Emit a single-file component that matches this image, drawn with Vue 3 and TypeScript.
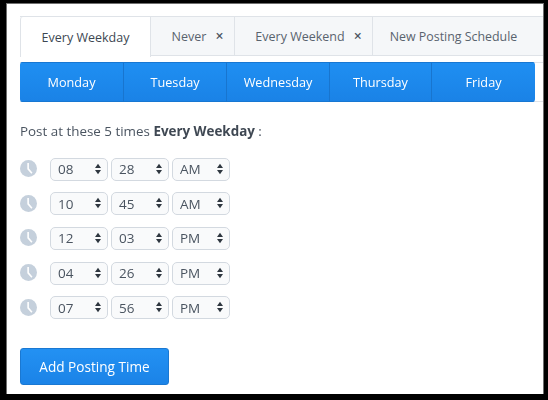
<script setup lang="ts">
interface TimeRow { hour: string; minute: string; period: string }
const tabs = [
  { label: 'Every Weekday', w: 131, active: true, close: false },
  { label: 'Never', w: 84, active: false, close: true },
  { label: 'Every Weekend', w: 138, active: false, close: true },
  { label: 'New Posting Schedule', w: 169, active: false, close: false },
]
const days = ['Monday', 'Tuesday', 'Wednesday', 'Thursday', 'Friday']
const rows: TimeRow[] = [
  { hour: '08', minute: '28', period: 'AM' },
  { hour: '10', minute: '45', period: 'AM' },
  { hour: '12', minute: '03', period: 'PM' },
  { hour: '04', minute: '26', period: 'PM' },
  { hour: '07', minute: '56', period: 'PM' },
]
</script>

<template>
  <div class="frame">
    <div class="tabs">
      <div
        v-for="t in tabs"
        :key="t.label"
        class="tab"
        :class="{ active: t.active, closable: t.close }"
        :style="{ width: t.w + 'px' }"
      >
        <span>{{ t.label }}</span>
        <span v-if="t.close" class="close">×</span>
      </div>
    </div>
    <div class="days-track">
      <div class="days">
        <div v-for="d in days" :key="d" class="day">{{ d }}</div>
      </div>
    </div>
    <p class="intro">Post at these 5 times <strong>Every Weekday</strong> :</p>
    <div class="rows">
      <div v-for="(r, i) in rows" :key="i" class="row">
        <svg class="clock" viewBox="0 0 18 18" aria-hidden="true">
          <circle cx="9" cy="9" r="9" fill="#c5d0dc" />
          <path d="M8.6 3.2V9.4L12.6 14" fill="none" stroke="#fff" stroke-width="1.7" />
        </svg>
        <div class="pick first">
          <select><option>{{ r.hour }}</option></select>
          <svg class="arrows" viewBox="0 0 7 12" aria-hidden="true"><path d="M3.5 0 7 4.8H0ZM3.5 12 0 7.2H7Z" /></svg>
        </div>
        <div class="pick">
          <select><option>{{ r.minute }}</option></select>
          <svg class="arrows" viewBox="0 0 7 12" aria-hidden="true"><path d="M3.5 0 7 4.8H0ZM3.5 12 0 7.2H7Z" /></svg>
        </div>
        <div class="pick">
          <select><option>{{ r.period }}</option></select>
          <svg class="arrows" viewBox="0 0 7 12" aria-hidden="true"><path d="M3.5 0 7 4.8H0ZM3.5 12 0 7.2H7Z" /></svg>
        </div>
      </div>
    </div>
    <button class="add" type="button">Add Posting Time</button>
  </div>
</template>

<style>
html, body { margin: 0; background: #000; }
</style>

<style scoped>
.frame {
  box-sizing: border-box;
  width: 536px;
  height: 390px;
  margin: 4px 0 0 7px;
  padding: 12px 0 0 13px;
  background: #fff;
  box-shadow: 0 0 0 1px #6f6f6f;
  font-family: "Open Sans", sans-serif;
  color: #4a5460;
  overflow: hidden;
  filter: blur(0.35px);
}
.tabs {
  display: flex;
  height: 40px;
  background: #f5f7f9;
  border-top: 1px solid #dfe3e8;
  border-bottom: 1px solid #dfe3e8;
  box-sizing: border-box;
}
.tab {
  box-sizing: border-box;
  display: flex;
  align-items: center;
  justify-content: center;
  gap: 9px;
  font-size: 12.5px;
  color: #59636e;
  border-right: 1px solid #dfe3e8;
  background: #f5f7f9;
}
.tab.closable { padding-left: 10px; }
.tab:last-child { border-right: 0; padding-right: 8px; font-size: 12.4px; }
.tab.active {
  background: #fff;
  color: #3d4752;
  border-left: 1px solid #dfe3e8;
  height: 40px;
  border-top-left-radius: 3px;
}
.close { font-size: 14px; font-weight: 600; color: #4a5460; line-height: 1; }
.days-track {
  margin-top: 6px;
  height: 40px;
  box-sizing: border-box;
  border-top: 1px solid #dfe3e8;
  border-bottom: 1px solid #dfe3e8;
}
.days {
  display: grid;
  grid-template-columns: 104px 103px 103px 102px 103px;
  width: 515px;
  height: 40px;
  margin-top: -1px;
  border-radius: 3px;
  overflow: hidden;
  background: linear-gradient(#1f8ff2, #1a82e6);
}
.day {
  display: flex;
  align-items: center;
  justify-content: center;
  color: #fff;
  font-size: 12.7px;
  box-shadow: inset 0 1px 0 #1777d2, inset 0 -1px 0 #1777d2;
  border-right: 1px solid #1875cf;
}
.day:last-child { border-right: 0; }
.intro {
  margin: 19px 0 0;
  font-size: 13.4px;
  line-height: 20px;
  color: #4a5460;
}
.intro strong { font-weight: 700; color: #3f4853; }
.rows {
  display: flex;
  flex-direction: column;
  gap: 11.7px;
  margin-top: 16px;
}
.row {
  display: flex;
  align-items: center;
  gap: 3px;
  height: 23px;
}
.clock { width: 17px; height: 17px; flex: none; }
.pick { position: relative; width: 58px; height: 23px; }
.pick.first { margin-left: 10px; }
.pick select {
  appearance: none;
  -webkit-appearance: none;
  box-sizing: border-box;
  width: 100%;
  height: 100%;
  margin: 0;
  padding: 0 0 0 7px;
  background: #f9fafb;
  border: 1px solid #d3d9e0;
  border-radius: 5px;
  font: 13.5px "Open Sans", sans-serif;
  color: #4a5460;
}
.arrows {
  position: absolute;
  right: 7px;
  top: 5.5px;
  width: 6px;
  height: 12px;
  fill: #2f3740;
  pointer-events: none;
}
.add {
  display: block;
  box-sizing: border-box;
  width: 149px;
  height: 37px;
  margin-top: 29px;
  padding: 0;
  background: linear-gradient(#2391f3, #1b83e7);
  border: 1px solid #1a78d2;
  border-radius: 3px;
  color: #fff;
  font: 500 13.6px "Open Sans", sans-serif;
}
</style>
